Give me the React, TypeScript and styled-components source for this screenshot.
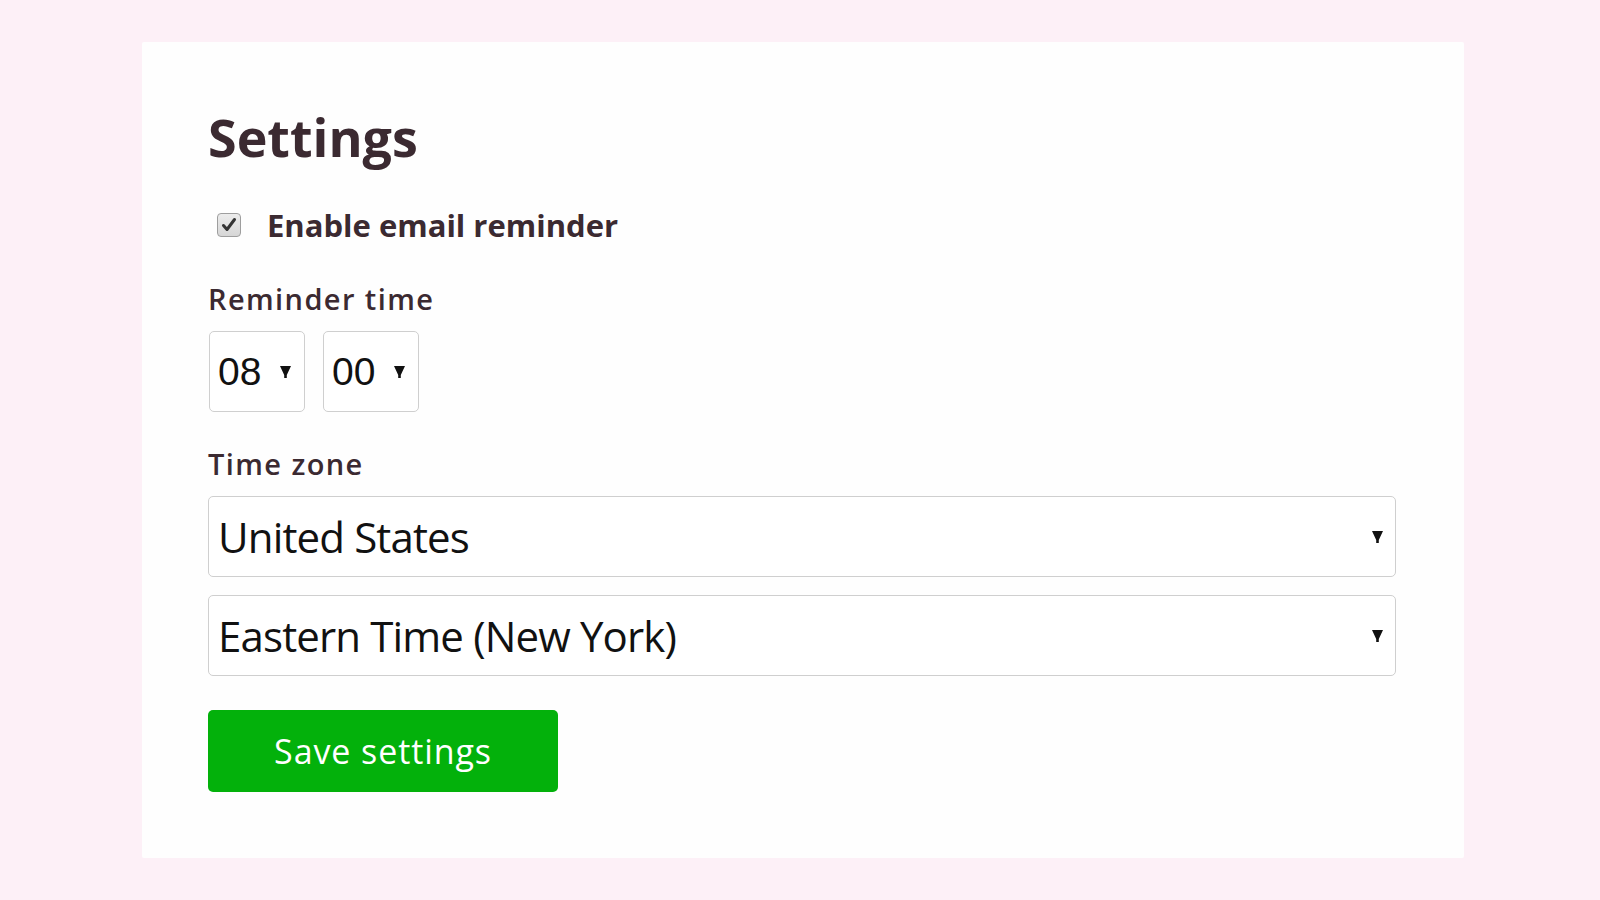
import React from "react";
import styled, { createGlobalStyle } from "styled-components";

const Global = createGlobalStyle`
  html, body {
    margin: 0;
    padding: 0;
    background: #fdf0f7;
  }
  body {
    font-family: "Open Sans", "Noto Sans", sans-serif;
    color: #3b2a31;
  }
  * { box-sizing: border-box; }
`;

const Page = styled.div`
  min-height: 900px;
  padding: 42px 136px 42px 142px;
`;

const Card = styled.form`
  background: #fefefe;
  border-radius: 2px;
  padding: 65px 68px 66px 66px;
  display: flex;
  flex-direction: column;
  align-items: flex-start;
`;

const Title = styled.h1`
  margin: 0 0 40px;
  font-size: 52px;
  line-height: 60px;
  font-weight: 700;
  color: #3b2a31;
`;

const CheckRow = styled.label`
  display: flex;
  align-items: center;
  gap: 26px;
  height: 36px;
  padding-left: 9px;
  margin-bottom: 39px;
  cursor: pointer;
`;

const CheckWrap = styled.span`
  position: relative;
  width: 24px;
  height: 24px;
  display: inline-block;
`;

const CheckInput = styled.input`
  appearance: none;
  margin: 0;
  width: 24px;
  height: 24px;
  border: 1.5px solid #9e9e9e;
  border-radius: 4px;
  background: linear-gradient(#ececec, #d6d6d6);
`;

const CheckMark = styled.svg`
  position: absolute;
  left: 4px;
  top: 4px;
  width: 16px;
  height: 16px;
  pointer-events: none;
`;

const CheckText = styled.span`
  font-size: 31px;
  line-height: 36px;
  font-weight: 700;
  color: #3b2a31;
`;

const Label = styled.div<{ $top?: number }>`
  font-size: 29px;
  line-height: 34px;
  font-weight: 600;
  letter-spacing: 1.4px;
  color: #3b2a31;
  margin-top: ${(p) => p.$top ?? 0}px;
  margin-bottom: 15px;
`;

const TimeRow = styled.div`
  display: flex;
  gap: 18px;
  padding-left: 1px;
`;

const SelectWrap = styled.div<{ $w?: string }>`
  position: relative;
  width: ${(p) => p.$w ?? "100%"};
`;

const Select = styled.select<{ $mono?: boolean }>`
  appearance: none;
  width: 100%;
  height: 81px;
  margin: 0;
  border: 1.5px solid #cfcfcf;
  border-radius: 5px;
  background: #fff;
  color: #111;
  padding: ${(p) => (p.$mono ? "0 0 0 8px" : "0 0 0 9px")};
  font-family: ${(p) =>
    p.$mono ? `"Liberation Sans", Arial, sans-serif` : `"Open Sans", "Noto Sans", sans-serif`};
  font-size: ${(p) => (p.$mono ? "39px" : "42px")};
  letter-spacing: ${(p) => (p.$mono ? "0" : "-0.85px")};
  outline: none;
`;

const Arrow = styled.svg<{ $right: number }>`
  position: absolute;
  right: ${(p) => p.$right}px;
  top: 50%;
  width: 11px;
  height: 12px;
  transform: translateY(-50%);
  pointer-events: none;
`;

const ZoneStack = styled.div`
  width: 100%;
  display: flex;
  flex-direction: column;
  gap: 18px;
`;

const SaveButton = styled.button`
  margin-top: 34px;
  width: 350px;
  height: 82px;
  border: none;
  border-radius: 5px;
  background: #03b10b;
  color: #ffffff;
  font-family: "Open Sans", "Noto Sans", sans-serif;
  font-size: 34px;
  letter-spacing: 0.9px;
  font-weight: 400;
  cursor: pointer;
`;

const DownArrow = ({ right }: { right: number }) => (
  <Arrow $right={right} viewBox="0 0 11 12">
    <path d="M0 0 H11 L6.8 9 V12 H4.2 V9 Z" fill="#111" />
  </Arrow>
);

export default function App() {
  return (
    <>
      <Global />
      <Page>
        <Card onSubmit={(e) => e.preventDefault()}>
          <Title>Settings</Title>
          <CheckRow>
            <CheckWrap>
              <CheckInput type="checkbox" defaultChecked />
              <CheckMark viewBox="0 0 16 16">
                <path
                  d="M2.5 8.5 L6 12.5 L13.5 2.5"
                  fill="none"
                  stroke="#333"
                  strokeWidth="3"
                  strokeLinecap="round"
                  strokeLinejoin="round"
                />
              </CheckMark>
            </CheckWrap>
            <CheckText>Enable email reminder</CheckText>
          </CheckRow>

          <Label>Reminder time</Label>
          <TimeRow>
            <SelectWrap $w="96px">
              <Select $mono defaultValue="08">
                {Array.from({ length: 24 }, (_, i) => String(i).padStart(2, "0")).map((h) => (
                  <option key={h} value={h}>
                    {h}
                  </option>
                ))}
              </Select>
              <DownArrow right={14} />
            </SelectWrap>
            <SelectWrap $w="96px">
              <Select $mono defaultValue="00">
                {["00", "15", "30", "45"].map((m) => (
                  <option key={m} value={m}>
                    {m}
                  </option>
                ))}
              </Select>
              <DownArrow right={14} />
            </SelectWrap>
          </TimeRow>

          <Label $top={35}>Time zone</Label>
          <ZoneStack>
            <SelectWrap>
              <Select defaultValue="us">
                <option value="us">United States</option>
                <option value="ca">Canada</option>
                <option value="uk">United Kingdom</option>
              </Select>
              <DownArrow right={13} />
            </SelectWrap>
            <SelectWrap>
              <Select defaultValue="ny">
                <option value="ny">Eastern Time (New York)</option>
                <option value="chi">Central Time (Chicago)</option>
                <option value="den">Mountain Time (Denver)</option>
                <option value="la">Pacific Time (Los Angeles)</option>
              </Select>
              <DownArrow right={13} />
            </SelectWrap>
          </ZoneStack>

          <SaveButton type="submit">Save settings</SaveButton>
        </Card>
      </Page>
    </>
  );
}
